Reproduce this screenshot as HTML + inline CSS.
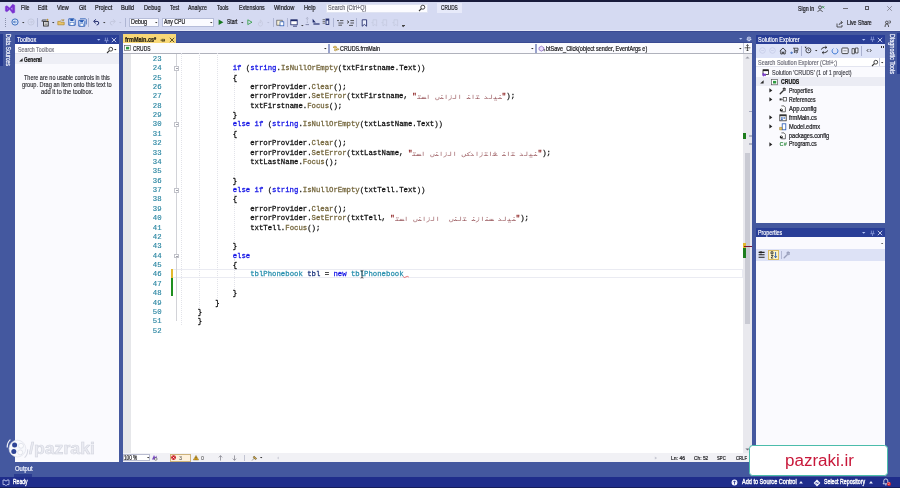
<!DOCTYPE html>
<html><head><meta charset="utf-8"><title>CRUDS - Microsoft Visual Studio</title>
<style>
html,body{margin:0;padding:0;}
body{width:900px;height:488px;overflow:hidden;position:relative;background:#44589f;font-family:"Liberation Sans",sans-serif;}
#r{position:absolute;left:0;top:0;width:900px;height:488px;overflow:hidden;will-change:transform;filter:blur(0.3px);}
#r>div,#r>svg,#r>span{position:absolute;}
svg{overflow:visible;}
.t{white-space:nowrap;transform-origin:0 50%;display:block;-webkit-text-stroke:0.22px currentColor;}
.c{white-space:pre;font-family:"Liberation Mono",monospace;font-size:7.304px;line-height:9.375px;height:9.375px;color:#101010;-webkit-text-stroke:0.26px currentColor;}
.c span{-webkit-text-stroke:0.26px currentColor;}
.n{text-align:right;font-family:"Liberation Mono",monospace;font-size:7.304px;line-height:9.375px;height:9.375px;color:#2a86a2;-webkit-text-stroke:0.15px currentColor;}
</style></head><body><div id="r"><div style="left:0px;top:0px;width:900px;height:488px;background:#44589f;"></div><div style="left:0px;top:0px;width:900px;height:31px;background:#d5daf2;"></div><div style="left:0px;top:29.8px;width:900px;height:1px;background:#e2e6f7;"></div><div style="left:0px;top:0px;width:900px;height:1.7px;background:#181b3c;"></div><div style="left:0px;top:30.8px;width:900px;height:1.6px;background:#3a4a92;"></div><span class="t" id="t1" style="left:20.75px;top:3.20px;line-height:10px;font-size:7px;color:#1a1a1e;transform:scaleX(0.7535);">File</span><span class="t" id="t2" style="left:38.25px;top:3.20px;line-height:10px;font-size:7px;color:#1a1a1e;transform:scaleX(0.7668);">Edit</span><span class="t" id="t3" style="left:57px;top:3.20px;line-height:10px;font-size:7px;color:#1a1a1e;transform:scaleX(0.7809);">View</span><span class="t" id="t4" style="left:78.75px;top:3.20px;line-height:10px;font-size:7px;color:#1a1a1e;transform:scaleX(0.7818);">Git</span><span class="t" id="t5" style="left:94.5px;top:3.20px;line-height:10px;font-size:7px;color:#1a1a1e;transform:scaleX(0.7914);">Project</span><span class="t" id="t6" style="left:121.25px;top:3.20px;line-height:10px;font-size:7px;color:#1a1a1e;transform:scaleX(0.8345);">Build</span><span class="t" id="t7" style="left:143.5px;top:3.20px;line-height:10px;font-size:7px;color:#1a1a1e;transform:scaleX(0.7994);">Debug</span><span class="t" id="t8" style="left:169.5px;top:3.20px;line-height:10px;font-size:7px;color:#1a1a1e;transform:scaleX(0.7202);">Test</span><span class="t" id="t9" style="left:188px;top:3.20px;line-height:10px;font-size:7px;color:#1a1a1e;transform:scaleX(0.7629);">Analyze</span><span class="t" id="t10" style="left:216.5px;top:3.20px;line-height:10px;font-size:7px;color:#1a1a1e;transform:scaleX(0.7036);">Tools</span><span class="t" id="t11" style="left:238.75px;top:3.20px;line-height:10px;font-size:7px;color:#1a1a1e;transform:scaleX(0.7518);">Extensions</span><span class="t" id="t12" style="left:274.25px;top:3.20px;line-height:10px;font-size:7px;color:#1a1a1e;transform:scaleX(0.8130);">Window</span><span class="t" id="t13" style="left:304px;top:3.20px;line-height:10px;font-size:7px;color:#1a1a1e;transform:scaleX(0.7983);">Help</span><svg style="left:5.4px;top:3.5px;" width="10" height="9.6" viewBox="0 0 10 9.6"><path d="M0.4 2.5 L1.9 1.8 L4.7 4 L7.6 0.3 L9.7 1.2 L9.7 8.4 L7.6 9.3 L4.7 5.6 L1.9 7.8 L0.4 7.1 Z M2.1 3.9 L2.1 5.7 L3.2 4.8 Z M7.5 3.2 L5.8 4.8 L7.5 6.4 Z" fill="#7a30d0" stroke="#7a30d0" stroke-width="0.5" stroke-linejoin="round" fill-rule="evenodd"/></svg><div style="left:325.6px;top:3.5px;width:102.6px;height:9.3px;background:#fcfcff;border:0.4px solid #dfe3f2;box-sizing:border-box;"></div><span class="t" id="t14" style="left:328px;top:3.00px;line-height:10px;font-size:6.8px;color:#6d6d78;transform:scaleX(0.8005);">Search (Ctrl+Q)</span><svg style="left:418px;top:4px;" width="8" height="8" viewBox="0 0 8 8"><circle cx="4.8" cy="3.2" r="2" fill="none" stroke="#333" stroke-width="0.9"/><path d="M3.4 4.6 L1 7" stroke="#333" stroke-width="1.1"/></svg><div style="left:436.6px;top:2.6px;width:25.9px;height:10.3px;background:#e7eafa;"></div><span class="t" id="t15" style="left:441.25px;top:3.00px;line-height:10px;font-size:6.8px;color:#1a1a1e;transform:scaleX(0.6930);">CRUDS</span><span class="t" id="t16" style="left:797.5px;top:3.50px;line-height:10px;font-size:6.8px;color:#1a1a1e;transform:scaleX(0.7814);">Sign in</span><svg style="left:817px;top:4.5px;" width="8" height="8" viewBox="0 0 8 8"><circle cx="3" cy="2.4" r="1.5" fill="none" stroke="#333" stroke-width="0.8"/><path d="M0.6 7 Q3 2.8 5.6 7" fill="none" stroke="#333" stroke-width="0.8"/><path d="M5 1 L7.4 3.4 M7.4 1 L5 3.4" stroke="#2a8a3a" stroke-width="0.7"/></svg><div style="left:843.4px;top:8.1px;width:4.6px;height:0.7px;background:#70707a;"></div><div style="left:865px;top:6.2px;width:4px;height:4px;background:transparent;border:0.7px solid #55555e;box-sizing:border-box;"></div><svg style="left:886px;top:5px;" width="7" height="7" viewBox="0 0 7 7"><path d="M1.2 1.2 L5.8 5.8 M5.8 1.2 L1.2 5.8" stroke="#70707a" stroke-width="0.7"/></svg><svg style="left:836px;top:19.5px;" width="8" height="8" viewBox="0 0 8 8"><path d="M1 3.5 L1 7 L6 7 L6 5" fill="none" stroke="#333" stroke-width="0.8"/><path d="M3 5 Q3.5 2.5 6 2.5 M4.8 1 L6.5 2.5 L4.8 4" fill="none" stroke="#333" stroke-width="0.8"/></svg><span class="t" id="t17" style="left:847px;top:18.00px;line-height:10px;font-size:6.8px;color:#1a1a1e;transform:scaleX(0.7615);">Live Share</span><svg style="left:883px;top:19.5px;" width="8" height="8" viewBox="0 0 8 8"><path d="M2 7 L2.4 4.6 Q3.8 3.4 5.2 4.6 L5.6 7" fill="none" stroke="#333" stroke-width="0.8"/><circle cx="3.8" cy="2.4" r="1.3" fill="none" stroke="#333" stroke-width="0.8"/><path d="M5.5 1 L7.5 1 L7.5 2.8 L6.5 2.8 L6 3.5 L6 2.8" fill="none" stroke="#333" stroke-width="0.6"/></svg><div style="left:5.2px;top:17.5px;width:0.8px;height:0.8px;background:#8a90aa;"></div><div style="left:5.2px;top:19.5px;width:0.8px;height:0.8px;background:#8a90aa;"></div><div style="left:5.2px;top:21.5px;width:0.8px;height:0.8px;background:#8a90aa;"></div><div style="left:5.2px;top:23.5px;width:0.8px;height:0.8px;background:#8a90aa;"></div><div style="left:5.2px;top:25.5px;width:0.8px;height:0.8px;background:#8a90aa;"></div><svg style="left:10.5px;top:18px;" width="8" height="8" viewBox="0 0 8 8"><circle cx="4" cy="4" r="3.1" fill="#dfe9fb" stroke="#2f63b8" stroke-width="0.9"/><path d="M5.6 4 L2.6 4 M3.8 2.7 L2.5 4 L3.8 5.3" fill="none" stroke="#2f63b8" stroke-width="0.8"/></svg><svg style="left:21.75px;top:21.975px;" width="2.5" height="1.25" viewBox="0 0 2.5 1.25"><path d="M0 0 L2.5 0 L1.25 1.25 Z" fill="#333"/></svg><svg style="left:26.5px;top:18px;" width="8" height="8" viewBox="0 0 8 8"><circle cx="4" cy="4" r="3.1" fill="none" stroke="#c2c7dc" stroke-width="0.9"/><path d="M2.4 4 L5.4 4 M4.2 2.7 L5.5 4 L4.2 5.3" fill="none" stroke="#c2c7dc" stroke-width="0.8"/></svg><div style="left:37.4px;top:17.5px;width:0.7px;height:9.5px;background:#aeb5d3;"></div><svg style="left:41px;top:17.5px;" width="9" height="9" viewBox="0 0 9 9"><path d="M1.2 2 L5.5 2 M1.2 2 L1.2 4" stroke="#333" stroke-width="0.8" fill="none"/><rect x="2.6" y="3.4" width="4.6" height="4.6" fill="#fff" stroke="#222" stroke-width="0.9"/><path d="M3.5 5 L6.3 5 M3.5 6.4 L6.3 6.4" stroke="#444" stroke-width="0.6"/><path d="M6.5 0.8 L6.5 2.8 M5.5 1.8 L7.5 1.8" stroke="#b8860b" stroke-width="0.7"/></svg><svg style="left:51.75px;top:21.975px;" width="2.5" height="1.25" viewBox="0 0 2.5 1.25"><path d="M0 0 L2.5 0 L1.25 1.25 Z" fill="#333"/></svg><svg style="left:57px;top:18px;" width="9" height="8" viewBox="0 0 9 8"><path d="M0.8 6.8 L0.8 3.4 L3.2 3.4 L3.8 4.2 L7.2 4.2 L7.2 6.8 Z" fill="#e9c46a" stroke="#a67c1a" stroke-width="0.6"/><path d="M3.5 2.6 Q5 0.8 6.6 2.4 M6.8 1 L6.7 2.6 L5.2 2.5" fill="none" stroke="#a67c1a" stroke-width="0.6"/></svg><svg style="left:68px;top:18.2px;" width="8" height="8" viewBox="0 0 8 8"><path d="M0.8 0.8 L6.2 0.8 L7.2 1.8 L7.2 7.2 L0.8 7.2 Z" fill="#e8f0fd" stroke="#2458b3" stroke-width="0.9"/><rect x="2.3" y="0.9" width="3.2" height="2.2" fill="#2458b3"/><rect x="2" y="4.6" width="4" height="2.6" fill="#fff" stroke="#2458b3" stroke-width="0.5"/></svg><svg style="left:77.5px;top:18px;" width="9" height="9" viewBox="0 0 9 9"><path d="M2 0.8 L7.6 0.8 L8.3 1.5 L8.3 6.4" fill="none" stroke="#2458b3" stroke-width="0.8"/><path d="M0.8 2.4 L5.8 2.4 L6.8 3.4 L6.8 8.2 L0.8 8.2 Z" fill="#e8f0fd" stroke="#2458b3" stroke-width="0.9"/><rect x="2.2" y="2.5" width="3" height="1.9" fill="#2458b3"/><rect x="2" y="5.8" width="3.6" height="2.3" fill="#fff" stroke="#2458b3" stroke-width="0.5"/></svg><div style="left:88px;top:17.5px;width:0.7px;height:9.5px;background:#aeb5d3;"></div><svg style="left:92px;top:18px;" width="8" height="8" viewBox="0 0 8 8"><path d="M2.2 3.4 L5 3.4 Q6.8 3.4 6.8 5 Q6.8 6.8 4.6 7" fill="none" stroke="#1f2a6b" stroke-width="1"/><path d="M3.8 1.4 L1.6 3.4 L3.8 5.4" fill="none" stroke="#1f2a6b" stroke-width="1"/></svg><svg style="left:103.25px;top:21.975px;" width="2.5" height="1.25" viewBox="0 0 2.5 1.25"><path d="M0 0 L2.5 0 L1.25 1.25 Z" fill="#333"/></svg><svg style="left:108.5px;top:18px;" width="8" height="8" viewBox="0 0 8 8"><path d="M5.8 3.4 L3 3.4 Q1.2 3.4 1.2 5 Q1.2 6.8 3.4 7" fill="none" stroke="#c3c8de" stroke-width="1"/><path d="M4.2 1.4 L6.4 3.4 L4.2 5.4" fill="none" stroke="#c3c8de" stroke-width="1"/></svg><svg style="left:119.25px;top:21.975px;" width="2.5" height="1.25" viewBox="0 0 2.5 1.25"><path d="M0 0 L2.5 0 L1.25 1.25 Z" fill="#b9bed6"/></svg><div style="left:125px;top:17.5px;width:0.7px;height:9.5px;background:#aeb5d3;"></div><div style="left:128.75px;top:17.5px;width:30.5px;height:9.6px;background:#fbfbff;border:0.6px solid #b6bdd9;box-sizing:border-box;"></div><span class="t" id="t18" style="left:131px;top:17.40px;line-height:10px;font-size:6.8px;color:#1a1a1e;transform:scaleX(0.7988);">Debug</span><svg style="left:154.75px;top:21.975px;" width="2.5" height="1.25" viewBox="0 0 2.5 1.25"><path d="M0 0 L2.5 0 L1.25 1.25 Z" fill="#333"/></svg><div style="left:162px;top:17.5px;width:51.75px;height:9.6px;background:#fbfbff;border:0.6px solid #b6bdd9;box-sizing:border-box;"></div><span class="t" id="t19" style="left:164.25px;top:17.40px;line-height:10px;font-size:6.8px;color:#1a1a1e;transform:scaleX(0.7602);">Any CPU</span><svg style="left:209.5px;top:21.975px;" width="2.5" height="1.25" viewBox="0 0 2.5 1.25"><path d="M0 0 L2.5 0 L1.25 1.25 Z" fill="#333"/></svg><svg style="left:217.5px;top:19.2px;" width="6" height="6.5" viewBox="0 0 6 6.5"><path d="M0.6 0.4 L5.4 3.2 L0.6 6 Z" fill="#17771f"/></svg><span class="t" id="t20" style="left:227px;top:17.40px;line-height:10px;font-size:6.8px;color:#1a1a1e;transform:scaleX(0.7312);">Start</span><svg style="left:240.75px;top:21.975px;" width="2.5" height="1.25" viewBox="0 0 2.5 1.25"><path d="M0 0 L2.5 0 L1.25 1.25 Z" fill="#333"/></svg><svg style="left:246.5px;top:19.2px;" width="6" height="6.5" viewBox="0 0 6 6.5"><path d="M0.8 0.8 L5 3.2 L0.8 5.6 Z" fill="none" stroke="#2a9a3a" stroke-width="0.8"/></svg><svg style="left:257px;top:18.5px;" width="7" height="8" viewBox="0 0 7 8"><path d="M3.5 0.8 Q6 3.4 5.4 5.6 Q4.8 7.2 3.4 7.2 Q1.6 7 1.4 5.2 Q1.4 3.8 2.6 2.8 Q2.8 4 3.6 3.8 Q3 2.4 3.5 0.8 Z" fill="none" stroke="#c5c9dd" stroke-width="0.8"/></svg><svg style="left:267.0px;top:21.975px;" width="2.5" height="1.25" viewBox="0 0 2.5 1.25"><path d="M0 0 L2.5 0 L1.25 1.25 Z" fill="#b9bed6"/></svg><div style="left:272.5px;top:17.5px;width:0.7px;height:9.5px;background:#aeb5d3;"></div><svg style="left:276px;top:18.5px;" width="9" height="8" viewBox="0 0 9 8"><rect x="0.8" y="1.2" width="5.4" height="5" fill="#f7f0d6" stroke="#555" stroke-width="0.7"/><rect x="4" y="2.8" width="3.8" height="4" fill="#fff" stroke="#2458b3" stroke-width="0.7"/></svg><div style="left:286.75px;top:17.5px;width:0.7px;height:9.5px;background:#aeb5d3;"></div><svg style="left:290px;top:18.5px;" width="9" height="8" viewBox="0 0 9 8"><rect x="0.8" y="0.8" width="6.4" height="5" fill="#fff" stroke="#1f2a6b" stroke-width="0.8"/><rect x="0.8" y="0.8" width="6.4" height="1.4" fill="#1f2a6b"/><path d="M3 7.2 L7 7.2" stroke="#1f2a6b" stroke-width="0.8"/></svg><svg style="left:301.2px;top:24.950000000000003px;" width="2.6" height="1.3" viewBox="0 0 2.6 1.3"><path d="M0 0 L2.6 0 L1.3 1.3 Z" fill="#333"/></svg><svg style="left:304px;top:17.4px;" width="7" height="9" viewBox="0 0 7 9"><path d="M3.3 0.6 L3.3 6.2 M2.1 1.8 L3.3 0.5 L4.5 1.8" fill="none" stroke="#8a8fa8" stroke-width="0.6" stroke-dasharray="0.9 0.6"/><path d="M1.6 7.6 L5 7.6" stroke="#6a7096" stroke-width="0.8"/></svg><svg style="left:311.5px;top:18px;" width="8" height="8" viewBox="0 0 8 8"><path d="M0.6 0.8 L0.6 4.4 L3.8 4.4 Z" fill="#1f2a6b"/><path d="M1.4 6 L7.6 6" stroke="#1f2a6b" stroke-width="1.2"/></svg><svg style="left:321.6px;top:18px;" width="8" height="8" viewBox="0 0 8 8"><path d="M0.6 1.6 L3 1.6 M0.6 3.4 L3 3.4 M0.6 5.2 L3 5.2" stroke="#555" stroke-width="0.8"/><rect x="4" y="1" width="2.8" height="5.4" fill="#dfe5f8" stroke="#1f2a6b" stroke-width="0.9"/><rect x="4" y="1" width="2.8" height="1.6" fill="#1f2a6b"/></svg><div style="left:332.5px;top:17.5px;width:0.7px;height:9.5px;background:#aeb5d3;"></div><svg style="left:336px;top:18.5px;" width="8" height="8" viewBox="0 0 8 8"><path d="M1 1.6 L3 1.6 M4 1.6 L7.4 1.6 M2.4 4 L7.4 4 M2.4 6.2 L6 6.2" stroke="#333" stroke-width="0.8"/></svg><svg style="left:346px;top:18.5px;" width="9" height="8" viewBox="0 0 9 8"><path d="M1 1.6 L3 3 L1 4.4 M4.4 1.6 L8 1.6 M4.4 4 L8 4 M3 6.4 L7 6.4" stroke="#333" stroke-width="0.8" fill="none"/></svg><div style="left:356px;top:17.5px;width:0.7px;height:9.5px;background:#aeb5d3;"></div><svg style="left:360.5px;top:18.5px;" width="7" height="8" viewBox="0 0 7 8"><path d="M1.2 0.8 L5.6 0.8 L5.6 7.2 L3.4 5.4 L1.2 7.2 Z" fill="#e9edfb" stroke="#262f6e" stroke-width="0.9"/></svg><svg style="left:371px;top:18.5px;" width="8" height="8" viewBox="0 0 8 8"><path d="M2 0.8 L5.6 0.8 L5.6 7 L3.8 5.4 L2 7 Z M0.4 3.6 L2 3.6" fill="none" stroke="#c3c8de" stroke-width="0.7"/></svg><svg style="left:381px;top:18.5px;" width="8" height="8" viewBox="0 0 8 8"><path d="M2 0.8 L5.6 0.8 L5.6 7 L3.8 5.4 L2 7 Z M0.4 3.6 L2 3.6" fill="none" stroke="#c3c8de" stroke-width="0.7"/></svg><svg style="left:391.5px;top:18.5px;" width="8" height="8" viewBox="0 0 8 8"><path d="M2 0.8 L5.6 0.8 L5.6 7 L3.8 5.4 L2 7 Z M0.4 3.6 L2 3.6" fill="none" stroke="#c3c8de" stroke-width="0.7"/></svg><div style="left:402px;top:25.2px;width:3.2px;height:0.7px;background:#444;"></div><svg style="left:402.40000000000003px;top:26.2px;" width="2.4" height="1.2" viewBox="0 0 2.4 1.2"><path d="M0 0 L2.4 0 L1.2 1.2 Z" fill="#444"/></svg><div style="left:0px;top:34.2px;width:3px;height:31.6px;background:#263b90;"></div><span class="t" id="t21" style="left:13.00px;top:33.80px;line-height:10px;font-size:7px;color:#f4f6ff;transform-origin:0 0;transform:rotate(90deg) scaleX(0.7496);">Data Sources</span><div style="left:15px;top:34.7px;width:104px;height:427.3px;background:#fafafe;"></div><div style="left:15px;top:34.7px;width:104px;height:9.7px;background:#293e97;"></div><span class="t" id="t22" style="left:17px;top:34.60px;line-height:10px;font-size:7px;color:#ffffff;-webkit-text-stroke:0.18px currentColor;transform:scaleX(0.7974);">Toolbox</span><svg style="left:96.6px;top:38.75px;" width="3.4" height="1.7" viewBox="0 0 3.4 1.7"><path d="M0 0 L3.4 0 L1.7 1.7 Z" fill="#b4c6f8"/></svg><svg style="left:103.5px;top:36.6px;" width="5" height="6.4" viewBox="0 0 5 6.4"><path d="M1.4 0.6 L1.4 3.6 M3.4 0.6 L3.4 3.6 M0.4 3.7 L4.6 3.7 M2.5 3.8 L2.5 6" stroke="#a9b9ee" stroke-width="0.6" fill="none"/></svg><svg style="left:111px;top:36.8px;" width="6" height="6" viewBox="0 0 6 6"><path d="M0.8 0.8 L5.2 5.2 M5.2 0.8 L0.8 5.2" stroke="#e4e8fb" stroke-width="0.8"/></svg><div style="left:15px;top:44.4px;width:104px;height:9.8px;background:#ffffff;border-bottom:0.5px solid #e3e5f0;box-sizing:border-box;"></div><span class="t" id="t23" style="left:17.5px;top:44.50px;line-height:10px;font-size:6.8px;color:#7a7a86;transform:scaleX(0.7757);">Search Toolbox</span><svg style="left:105.5px;top:45.6px;" width="8" height="8" viewBox="0 0 8 8"><circle cx="4.8" cy="3.2" r="1.9" fill="none" stroke="#333" stroke-width="0.9"/><path d="M3.4 4.6 L1 7" stroke="#333" stroke-width="1.1"/></svg><svg style="left:114.2px;top:49.15px;" width="2.6" height="1.3" viewBox="0 0 2.6 1.3"><path d="M0 0 L2.6 0 L1.3 1.3 Z" fill="#222"/></svg><div style="left:15px;top:54.4px;width:104px;height:9.5px;background:#eeeff6;"></div><svg style="left:18.7px;top:57.7px;" width="4" height="4" viewBox="0 0 4 4"><path d="M3.6 0.2 L3.6 3.6 L0.2 3.6 Z" fill="#222"/></svg><span class="t" id="t24" style="left:24.25px;top:54.80px;line-height:10px;font-size:6.9px;color:#111;font-weight:700;transform:scaleX(0.6914);">General</span><span class="t" id="t25" style="left:24.25px;top:72.60px;line-height:10px;font-size:6.7px;color:#1c1c22;-webkit-text-stroke:0.12px currentColor;transform:scaleX(0.8208);">There are no usable controls in this</span><span class="t" id="t26" style="left:22px;top:79.60px;line-height:10px;font-size:6.7px;color:#1c1c22;-webkit-text-stroke:0.12px currentColor;transform:scaleX(0.8441);">group. Drag an item onto this text to</span><span class="t" id="t27" style="left:40.75px;top:86.60px;line-height:10px;font-size:6.7px;color:#1c1c22;-webkit-text-stroke:0.12px currentColor;transform:scaleX(0.8674);">add it to the toolbox.</span><div style="left:122.6px;top:43px;width:629.1999999999999px;height:419px;background:#ffffff;"></div><div style="left:122.6px;top:34px;width:53.80000000000001px;height:9.6px;background:#f8d877;"></div><svg style="left:739.0999999999999px;top:38.15px;" width="3.4" height="1.7" viewBox="0 0 3.4 1.7"><path d="M0 0 L3.4 0 L1.7 1.7 Z" fill="#b4c6f8"/></svg><svg style="left:746px;top:35.8px;" width="6" height="6" viewBox="0 0 6 6"><circle cx="3" cy="3" r="1.7" fill="none" stroke="#d5dcf6" stroke-width="1.4" stroke-dasharray="0.9 0.45"/><circle cx="3" cy="3" r="1.2" fill="none" stroke="#d5dcf6" stroke-width="0.7"/></svg><div style="left:122.6px;top:42.6px;width:629.1999999999999px;height:10.8px;background:#fbfbfe;"></div><div style="left:122.6px;top:34px;width:53.80000000000001px;height:9.4px;background:#f8d877;"></div><span class="t" id="t28" style="left:125px;top:34.50px;line-height:10px;font-size:7px;color:#1d1a10;font-weight:700;transform:scaleX(0.7874);">frmMain.cs*</span><svg style="left:160.2px;top:37.6px;" width="6" height="4.4" viewBox="0 0 6 4.4"><path d="M0.4 2.2 L2 2.2 M2 0.9 L2 3.5 M2 1.3 L4.4 1.3 L4.4 3.1 L2 3.1 M4.4 1 L4.4 3.4 M2 2.7 L4.4 2.7" stroke="#3b3210" stroke-width="0.6" fill="none"/></svg><svg style="left:168.6px;top:36.7px;" width="6" height="6" viewBox="0 0 6 6"><path d="M0.8 0.8 L5.2 5.2 M5.2 0.8 L0.8 5.2" stroke="#3b3210" stroke-width="0.8"/></svg><div style="left:122.6px;top:53.1px;width:629.1999999999999px;height:0.7px;background:#b0b2bc;"></div><div style="left:176.4px;top:41.6px;width:575.4px;height:1px;background:#3a4a92;"></div><svg style="left:124px;top:45.4px;" width="7" height="6.4" viewBox="0 0 7 6.4"><rect x="0.5" y="0.6" width="6" height="5" fill="#fff" stroke="#555" stroke-width="0.6"/><rect x="2" y="1.8" width="3.2" height="2.6" fill="#2e9a40"/></svg><span class="t" id="t29" style="left:132.5px;top:44.00px;line-height:10px;font-size:6.8px;color:#1a1a1e;transform:scaleX(0.7240);">CRUDS</span><svg style="left:324.45px;top:48.15px;" width="2.6" height="1.3" viewBox="0 0 2.6 1.3"><path d="M0 0 L2.6 0 L1.3 1.3 Z" fill="#222"/></svg><div style="left:328.4px;top:43.6px;width:1.5px;height:9.2px;background:#98a2cc;"></div><svg style="left:331.6px;top:45px;" width="8" height="7" viewBox="0 0 8 7"><path d="M1 2.2 L3 1 L5 2.2 L3 3.4 Z" fill="#e8c56a" stroke="#9a7a20" stroke-width="0.5"/><path d="M4 4.2 L5.6 3.4 L7.2 4.2 L5.6 5 Z M2 5 L3.4 4.4 L4.8 5 L3.4 5.8 Z" fill="#e8c56a" stroke="#9a7a20" stroke-width="0.5"/></svg><span class="t" id="t30" style="left:340px;top:44.00px;line-height:10px;font-size:6.8px;color:#1a1a1e;transform:scaleX(0.7904);">CRUDS.frmMain</span><svg style="left:531.2px;top:48.15px;" width="2.6" height="1.3" viewBox="0 0 2.6 1.3"><path d="M0 0 L2.6 0 L1.3 1.3 Z" fill="#222"/></svg><div style="left:535.4px;top:43.6px;width:1.5px;height:9.2px;background:#98a2cc;"></div><svg style="left:538.4px;top:45px;" width="8" height="7" viewBox="0 0 8 7"><path d="M1 2.6 L3.4 1.2 L5.8 2.6 L5.8 4.8 L3.4 6.2 L1 4.8 Z" fill="#e9defa" stroke="#6a3fb0" stroke-width="0.6"/><path d="M5.4 5 L7.4 5 M6.4 4 L6.4 6.4" stroke="#333" stroke-width="0.5"/></svg><span class="t" id="t31" style="left:546.25px;top:44.00px;line-height:10px;font-size:6.8px;color:#1a1a1e;transform:scaleX(0.8072);">btSave_Click(object sender, EventArgs e)</span><svg style="left:738.7px;top:48.15px;" width="2.6" height="1.3" viewBox="0 0 2.6 1.3"><path d="M0 0 L2.6 0 L1.3 1.3 Z" fill="#222"/></svg><div style="left:743px;top:43.3px;width:0.6px;height:9.5px;background:#c6c9d8;"></div><svg style="left:744.2px;top:44.4px;" width="7" height="7.6" viewBox="0 0 7 7.6"><path d="M0.6 3.8 L6.4 3.8 M3.5 0.6 L3.5 7 M2.3 1.8 L3.5 0.6 L4.7 1.8 M2.3 5.8 L3.5 7 L4.7 5.8" stroke="#222" stroke-width="0.7" fill="none"/></svg><div style="left:122.6px;top:53.8px;width:8.2px;height:398.8px;background:#e6e7ea;"></div><div style="left:743px;top:53.8px;width:8.799999999999955px;height:398.8px;background:#e9e9ee;"></div><div style="left:745.2px;top:153px;width:4.7px;height:170.8px;background:#c9cad3;"></div><svg style="left:745px;top:56px;" width="5" height="3" viewBox="0 0 5 3"><path d="M0.4 2.6 L2.5 0.4 L4.6 2.6 Z" fill="#9a9ba6"/></svg><svg style="left:745px;top:447.6px;" width="5" height="3" viewBox="0 0 5 3"><path d="M0.4 0.4 L4.6 0.4 L2.5 2.6 Z" fill="#6d6e78"/></svg><div style="left:749.2px;top:110.7px;width:2.4px;height:1.6px;background:#a3a7bd;"></div><div style="left:743.4px;top:132.8px;width:2.5px;height:6.3px;background:#1d7d1d;"></div><div style="left:749.2px;top:135px;width:2.4px;height:1.6px;background:#b0b3c2;"></div><div style="left:749.2px;top:143.1px;width:2.4px;height:1.6px;background:#b0b3c2;"></div><div style="left:743.2px;top:243px;width:2.6px;height:4.5px;background:#e3b92c;"></div><div style="left:743.2px;top:247.5px;width:2.6px;height:10.2px;background:#1d7d1d;"></div><div style="left:743.8px;top:245.8px;width:8.4px;height:1.2px;background:#7a1436;"></div><div style="left:171.6px;top:268.925px;width:571.2px;height:9.075px;background:transparent;border:0.7px solid #eaebf2;box-sizing:border-box;"></div><div style="left:170.8px;top:268.925px;width:2.2px;height:9.375px;background:#e3b92c;"></div><div style="left:170.8px;top:278.3px;width:2.2px;height:18.15px;background:#1f8f1f;"></div><div style="left:176.3px;top:53.8px;width:0.8px;height:266.8px;background:#d2d3d8;"></div><div style="left:181.4px;top:53.10px;width:0;height:271.88px;border-left:0.6px dotted #e2e3e9;"></div><div style="left:199px;top:53.10px;width:0;height:262.50px;border-left:0.6px dotted #e2e3e9;"></div><div style="left:216.5px;top:53.10px;width:0;height:253.13px;border-left:0.6px dotted #e2e3e9;"></div><div style="left:234px;top:71.85px;width:0;height:46.88px;border-left:0.6px dotted #e2e3e9;"></div><div style="left:234px;top:128.10px;width:0;height:56.25px;border-left:0.6px dotted #e2e3e9;"></div><div style="left:234px;top:193.72px;width:0;height:56.25px;border-left:0.6px dotted #e2e3e9;"></div><div style="left:234px;top:259.35px;width:0;height:37.50px;border-left:0.6px dotted #e2e3e9;"></div><div class="c" style="left:232.70px;top:64.17px;"><span style="color:#1414e6">if</span> (<span style="color:#1414e6">string</span>.<span style="color:#74663c">IsNullOrEmpty</span>(txtFirstname.Text))</div><div class="c" style="left:232.70px;top:73.55px;">{</div><div class="c" style="left:250.23px;top:82.92px;">errorProvider.<span style="color:#74663c">Clear</span>();</div><div class="c" style="left:250.23px;top:92.30px;">errorProvider.<span style="color:#74663c">SetError</span>(txtFirstname, <span style="color:#8a1c1c">"</span><svg class="fs" width="85.22" height="9.375" viewBox="0 0 85.22 9.375" style="position:static;display:inline-block;vertical-align:top;"><path d="M0.45 6.50L4.04 6.50M2.24 6.50l0 -1.3M1.35 3.80l0.5 0M2.92 3.80l0.5 0 M4.49 6.50L8.97 6.50M5.38 6.50l0 -1.2M6.73 6.50l0 -1.2M8.07 6.50l0 -1.2 M11.21 3.20L11.21 6.50 M22.20 5.30q0.3 2.8 -2.24 2.6q-2.24 -0.2 -1.35 -1.8 M23.10 6.50L26.24 6.50M23.55 6.50q1.12 -2.6 2.24 0M24.67 3.50l0.5 0 M29.15 3.20L29.15 6.50 M34.53 5.60q0.1 2 -2.69 2.5M34.09 4.00l0.5 0 M38.66 3.10L38.66 6.50L35.88 6.50 M42.61 3.20L42.61 6.50 M50.01 6.50L53.15 6.50M50.46 6.50q1.12 -2.6 2.24 0M51.58 3.50l0.5 0 M56.06 3.20L56.06 6.50 M58.75 6.50L62.34 6.50M60.55 6.50l0 -1.3M59.65 3.80l0.5 0M61.22 3.80l0.5 0 M68.62 4.60l2.02 1.9l-2.92 0 M74.54 3.10L74.54 6.50L71.76 6.50 M76.69 6.50L80.28 6.50M78.49 6.50l0 -1.3M77.59 8.10l0.5 0M79.16 8.10l0.5 0 M81.40 6.50L84.54 6.50M81.85 6.50q1.12 -2.6 2.24 0M82.97 3.50l0.5 0" fill="none" stroke="#85353c" stroke-opacity="0.85" stroke-width="0.62" stroke-linecap="round" stroke-linejoin="round"/></svg><span style="color:#8a1c1c">"</span>);</div><div class="c" style="left:250.23px;top:101.67px;">txtFirstname.<span style="color:#74663c">Focus</span>();</div><div class="c" style="left:232.70px;top:111.05px;">}</div><div class="c" style="left:232.70px;top:120.42px;"><span style="color:#1414e6">else if</span> (<span style="color:#1414e6">string</span>.<span style="color:#74663c">IsNullOrEmpty</span>(txtLastName.Text))</div><div class="c" style="left:232.70px;top:129.80px;">{</div><div class="c" style="left:250.23px;top:139.17px;">errorProvider.<span style="color:#74663c">Clear</span>();</div><div class="c" style="left:250.23px;top:148.55px;">errorProvider.<span style="color:#74663c">SetError</span>(txtLastName, <span style="color:#8a1c1c">"</span><svg class="fs" width="125.58" height="9.375" viewBox="0 0 125.58 9.375" style="position:static;display:inline-block;vertical-align:top;"><path d="M0.45 6.50L4.04 6.50M2.24 6.50l0 -1.3M1.35 3.80l0.5 0M2.92 3.80l0.5 0 M4.49 6.50L8.97 6.50M5.38 6.50l0 -1.2M6.73 6.50l0 -1.2M8.07 6.50l0 -1.2 M11.21 3.20L11.21 6.50 M22.20 5.30q0.3 2.8 -2.24 2.6q-2.24 -0.2 -1.35 -1.8 M23.10 6.50L26.24 6.50M23.55 6.50q1.12 -2.6 2.24 0M24.67 3.50l0.5 0 M29.15 3.20L29.15 6.50 M34.53 5.60q0.1 2 -2.69 2.5M34.09 4.00l0.5 0 M38.66 3.10L38.66 6.50L35.88 6.50 M42.61 3.20L42.61 6.50 M53.60 5.30q0.3 2.8 -2.24 2.6q-2.24 -0.2 -1.35 -1.8 M58.30 3.00L55.17 4.70L57.41 6.50L53.82 6.50 M59.65 4.60l2.02 1.9l-2.92 0 M65.03 3.20L65.03 6.50 M70.41 5.60q0.1 2 -2.69 2.5M69.97 4.00l0.5 0 M72.21 6.50L75.80 6.50M74.00 6.50l0 -1.3M73.11 3.80l0.5 0M74.68 3.80l0.5 0 M78.49 3.20L78.49 6.50 M80.73 6.50L85.22 6.50M81.40 4.80l3.14 0l-2.24 1.7M82.75 3.30l0.5 0 M90.37 6.50L93.51 6.50M90.82 6.50q1.12 -2.6 2.24 0M91.94 3.50l0.5 0 M96.43 3.20L96.43 6.50 M99.12 6.50L102.71 6.50M100.91 6.50l0 -1.3M100.02 3.80l0.5 0M101.59 3.80l0.5 0 M108.99 4.60l2.02 1.9l-2.92 0 M114.91 3.10L114.91 6.50L112.12 6.50 M117.06 6.50L120.65 6.50M118.85 6.50l0 -1.3M117.96 8.10l0.5 0M119.53 8.10l0.5 0 M121.77 6.50L124.91 6.50M122.22 6.50q1.12 -2.6 2.24 0M123.34 3.50l0.5 0" fill="none" stroke="#85353c" stroke-opacity="0.85" stroke-width="0.62" stroke-linecap="round" stroke-linejoin="round"/></svg><span style="color:#8a1c1c">"</span>);</div><div class="c" style="left:250.23px;top:157.92px;">txtLastName.<span style="color:#74663c">Focus</span>();</div><div class="c" style="left:232.70px;top:176.67px;">}</div><div class="c" style="left:232.70px;top:186.05px;"><span style="color:#1414e6">else if</span> (<span style="color:#1414e6">string</span>.<span style="color:#74663c">IsNullOrEmpty</span>(txtTell.Text))</div><div class="c" style="left:232.70px;top:195.42px;">{</div><div class="c" style="left:250.23px;top:204.80px;">errorProvider.<span style="color:#74663c">Clear</span>();</div><div class="c" style="left:250.23px;top:214.17px;">errorProvider.<span style="color:#74663c">SetError</span>(txtTell, <span style="color:#8a1c1c">"</span><svg class="fs" width="121.10" height="9.375" viewBox="0 0 121.10 9.375" style="position:static;display:inline-block;vertical-align:top;"><path d="M0.45 6.50L4.04 6.50M2.24 6.50l0 -1.3M1.35 3.80l0.5 0M2.92 3.80l0.5 0 M4.49 6.50L8.97 6.50M5.38 6.50l0 -1.2M6.73 6.50l0 -1.2M8.07 6.50l0 -1.2 M11.21 3.20L11.21 6.50 M22.20 5.30q0.3 2.8 -2.24 2.6q-2.24 -0.2 -1.35 -1.8 M23.10 6.50L26.24 6.50M23.55 6.50q1.12 -2.6 2.24 0M24.67 3.50l0.5 0 M29.15 3.20L29.15 6.50 M34.53 5.60q0.1 2 -2.69 2.5M34.09 4.00l0.5 0 M38.66 3.10L38.66 6.50L35.88 6.50 M42.61 3.20L42.61 6.50 M58.08 5.30q0.3 2.8 -2.24 2.6q-2.24 -0.2 -1.35 -1.8 M58.98 6.50L62.12 6.50M59.43 6.50q1.12 -2.6 2.24 0M60.55 3.50l0.5 0 M65.57 3.10L65.57 6.50L62.79 6.50 M67.72 6.50L71.31 6.50M69.52 6.50l0 -1.3M68.62 3.80l0.5 0M70.19 3.80l0.5 0 M76.92 6.50L80.06 6.50M77.37 6.50q1.12 -2.6 2.24 0M78.49 3.50l0.5 0 M83.87 5.60q0.1 2 -2.69 2.5M83.42 4.00l0.5 0 M87.46 3.20L87.46 6.50 M90.37 6.50L93.51 6.50M90.82 6.50q1.12 -2.6 2.24 0M91.94 3.50l0.5 0 M94.19 6.50L98.67 6.50M95.08 6.50l0 -1.2M96.43 6.50l0 -1.2M97.77 6.50l0 -1.2 M104.50 4.60l2.02 1.9l-2.92 0 M110.42 3.10L110.42 6.50L107.64 6.50 M112.57 6.50L116.16 6.50M114.37 6.50l0 -1.3M113.47 8.10l0.5 0M115.04 8.10l0.5 0 M117.28 6.50L120.42 6.50M117.73 6.50q1.12 -2.6 2.24 0M118.85 3.50l0.5 0" fill="none" stroke="#85353c" stroke-opacity="0.85" stroke-width="0.62" stroke-linecap="round" stroke-linejoin="round"/></svg><span style="color:#8a1c1c">"</span>);</div><div class="c" style="left:250.23px;top:223.55px;">txtTell.<span style="color:#74663c">Focus</span>();</div><div class="c" style="left:232.70px;top:242.30px;">}</div><div class="c" style="left:232.70px;top:251.67px;"><span style="color:#1414e6">else</span></div><div class="c" style="left:232.70px;top:261.05px;">{</div><div class="c" style="left:250.23px;top:270.43px;"><span style="color:#2b91af">tblPhonebook</span> <span style="color:#1f377f">tbl</span> = <span style="color:#1414e6">new</span> <span style="color:#2b91af">tblPhonebook</span></div><div class="c" style="left:232.70px;top:289.18px;">}</div><div class="c" style="left:215.16px;top:298.55px;">}</div><div class="c" style="left:197.63px;top:307.93px;">}</div><div class="c" style="left:197.63px;top:317.30px;">}</div><div class="n" style="left:140px;width:21.6px;top:54.80px;">23</div><div class="n" style="left:140px;width:21.6px;top:64.17px;">24</div><div class="n" style="left:140px;width:21.6px;top:73.55px;">25</div><div class="n" style="left:140px;width:21.6px;top:82.92px;">26</div><div class="n" style="left:140px;width:21.6px;top:92.30px;">27</div><div class="n" style="left:140px;width:21.6px;top:101.67px;">28</div><div class="n" style="left:140px;width:21.6px;top:111.05px;">29</div><div class="n" style="left:140px;width:21.6px;top:120.42px;">30</div><div class="n" style="left:140px;width:21.6px;top:129.80px;">31</div><div class="n" style="left:140px;width:21.6px;top:139.17px;">32</div><div class="n" style="left:140px;width:21.6px;top:148.55px;">33</div><div class="n" style="left:140px;width:21.6px;top:157.92px;">34</div><div class="n" style="left:140px;width:21.6px;top:167.30px;">35</div><div class="n" style="left:140px;width:21.6px;top:176.67px;">36</div><div class="n" style="left:140px;width:21.6px;top:186.05px;">37</div><div class="n" style="left:140px;width:21.6px;top:195.42px;">38</div><div class="n" style="left:140px;width:21.6px;top:204.80px;">39</div><div class="n" style="left:140px;width:21.6px;top:214.17px;">40</div><div class="n" style="left:140px;width:21.6px;top:223.55px;">41</div><div class="n" style="left:140px;width:21.6px;top:232.92px;">42</div><div class="n" style="left:140px;width:21.6px;top:242.30px;">43</div><div class="n" style="left:140px;width:21.6px;top:251.67px;">44</div><div class="n" style="left:140px;width:21.6px;top:261.05px;">45</div><div class="n" style="left:140px;width:21.6px;top:270.43px;">46</div><div class="n" style="left:140px;width:21.6px;top:279.80px;">47</div><div class="n" style="left:140px;width:21.6px;top:289.18px;">48</div><div class="n" style="left:140px;width:21.6px;top:298.55px;">49</div><div class="n" style="left:140px;width:21.6px;top:307.93px;">50</div><div class="n" style="left:140px;width:21.6px;top:317.30px;">51</div><div class="n" style="left:140px;width:21.6px;top:326.68px;">52</div><div style="left:174.4px;top:66.075px;width:4.6px;height:4.6px;background:#fff;border:0.7px solid #c2c3ca;box-sizing:border-box;"></div><div style="left:175.6px;top:68.175px;width:2.2px;height:0.5px;background:#a0a1aa;"></div><div style="left:174.4px;top:122.32499999999999px;width:4.6px;height:4.6px;background:#fff;border:0.7px solid #c2c3ca;box-sizing:border-box;"></div><div style="left:175.6px;top:124.425px;width:2.2px;height:0.5px;background:#a0a1aa;"></div><div style="left:174.4px;top:187.95px;width:4.6px;height:4.6px;background:#fff;border:0.7px solid #c2c3ca;box-sizing:border-box;"></div><div style="left:175.6px;top:190.04999999999998px;width:2.2px;height:0.5px;background:#a0a1aa;"></div><div style="left:174.4px;top:253.575px;width:4.6px;height:4.6px;background:#fff;border:0.7px solid #c2c3ca;box-sizing:border-box;"></div><div style="left:175.6px;top:255.67499999999998px;width:2.2px;height:0.5px;background:#a0a1aa;"></div><svg style="left:403.3px;top:275.925px;" width="6" height="2" viewBox="0 0 6 2"><path d="M0 0.4 Q1.4 2.3 2.8 1 T5.8 1" fill="none" stroke="#e03030" stroke-width="0.65"/></svg><svg style="left:359.8px;top:270.02500000000003px;" width="4" height="8.6" viewBox="0 0 4 8.6"><path d="M0.6 0.5 Q2 0.5 2 1.4 Q2 0.5 3.4 0.5 M2 1.2 L2 7.4 M0.6 8.1 Q2 8.1 2 7.2 Q2 8.1 3.4 8.1" fill="none" stroke="#222" stroke-width="0.7"/></svg><div style="left:122.6px;top:453.2px;width:629.1999999999999px;height:8.7px;background:#f1f1f5;"></div><div style="left:123px;top:454px;width:27.2px;height:7.4px;background:#ffffff;border:0.5px solid #b9bcd0;box-sizing:border-box;"></div><span class="t" id="t32" style="left:124.25px;top:452.90px;line-height:10px;font-size:6.6px;color:#1a1a1e;transform:scaleX(0.7084);">100 %</span><svg style="left:146.8px;top:457.4px;" width="2.4" height="1.2" viewBox="0 0 2.4 1.2"><path d="M0 0 L2.4 0 L1.2 1.2 Z" fill="#222"/></svg><svg style="left:151.4px;top:454.4px;" width="7" height="7" viewBox="0 0 7 7"><path d="M1 5.6 L3 1 L4.2 3.4 L5.4 1.6 L6 5.6 Z" fill="#7b4cc2"/><circle cx="4.8" cy="5" r="1.3" fill="#fff" stroke="#333" stroke-width="0.5"/></svg><div style="left:169.5px;top:453.6px;width:21.4px;height:8.2px;background:#fdf1dc;border:0.6px solid #cdb27a;box-sizing:border-box;"></div><svg style="left:171.2px;top:455.2px;" width="5.2" height="5.2" viewBox="0 0 5.2 5.2"><circle cx="2.6" cy="2.6" r="2.4" fill="#c8171e"/><path d="M1.6 1.6 L3.6 3.6 M3.6 1.6 L1.6 3.6" stroke="#fff" stroke-width="0.7"/></svg><span class="t" id="t33" style="left:179px;top:452.90px;line-height:10px;font-size:6.2px;color:#555;-webkit-text-stroke:0.05px currentColor;transform:scaleX(0.8688);">3</span><svg style="left:192.8px;top:455px;" width="6" height="5.4" viewBox="0 0 6 5.4"><path d="M3 0.4 L5.7 5 L0.3 5 Z" fill="#e0a820" stroke="#7a5a10" stroke-width="0.4"/><path d="M3 1.8 L3 3.6 M3 4.1 L3 4.5" stroke="#222" stroke-width="0.6"/></svg><span class="t" id="t34" style="left:200.8px;top:452.90px;line-height:10px;font-size:6.2px;color:#555;-webkit-text-stroke:0.05px currentColor;transform:scaleX(0.8688);">0</span><svg style="left:218.4px;top:455px;" width="5" height="6" viewBox="0 0 5 6"><path d="M2.5 5.6 L2.5 0.8 M0.8 2.4 L2.5 0.6 L4.2 2.4" fill="none" stroke="#7a7a84" stroke-width="0.7"/></svg><svg style="left:232px;top:455px;" width="5" height="6" viewBox="0 0 5 6"><path d="M2.5 0.4 L2.5 5.2 M0.8 3.6 L2.5 5.4 L4.2 3.6" fill="none" stroke="#7a7a84" stroke-width="0.7"/></svg><div style="left:244.4px;top:454.6px;width:0.5px;height:6.4px;background:#c2c4d2;"></div><svg style="left:250.6px;top:454.6px;" width="7" height="6.4" viewBox="0 0 7 6.4"><path d="M1 5.6 L3.6 2.8 M3 1 L5.8 3.6 L4.4 4.6 L2.2 2.4 Z" fill="#caa24a" stroke="#5a4a20" stroke-width="0.5"/></svg><svg style="left:259.8px;top:457.4px;" width="2.4" height="1.2" viewBox="0 0 2.4 1.2"><path d="M0 0 L2.4 0 L1.2 1.2 Z" fill="#222"/></svg><svg style="left:276px;top:456px;" width="4" height="4" viewBox="0 0 4 4"><path d="M3 0.4 L0.8 2 L3 3.6 Z" fill="#d2d3dc"/></svg><svg style="left:654px;top:456px;" width="4" height="4" viewBox="0 0 4 4"><path d="M0.8 0.4 L3.2 2 L0.8 3.6 Z" fill="#c6c7d2"/></svg><span class="t" id="t35" style="left:670.7px;top:453.00px;line-height:10px;font-size:6.2px;color:#1a1a1e;transform:scaleX(0.8138);">Ln: 46</span><span class="t" id="t36" style="left:693.7px;top:453.00px;line-height:10px;font-size:6.2px;color:#1a1a1e;transform:scaleX(0.7842);">Ch: 52</span><span class="t" id="t37" style="left:716.8px;top:453.00px;line-height:10px;font-size:6.2px;color:#1a1a1e;transform:scaleX(0.6832);">SPC</span><span class="t" id="t38" style="left:736px;top:453.00px;line-height:10px;font-size:6.2px;color:#1a1a1e;transform:scaleX(0.6802);">CRLF</span><div style="left:756px;top:34.7px;width:129px;height:188.6px;background:#fafafe;"></div><div style="left:756px;top:34.7px;width:129px;height:8.9px;background:#293e97;"></div><span class="t" id="t39" style="left:757.8px;top:34.50px;line-height:10px;font-size:7px;color:#ffffff;-webkit-text-stroke:0.18px currentColor;transform:scaleX(0.7822);">Solution Explorer</span><svg style="left:862.3px;top:38.75px;" width="3.4" height="1.7" viewBox="0 0 3.4 1.7"><path d="M0 0 L3.4 0 L1.7 1.7 Z" fill="#b4c6f8"/></svg><svg style="left:869.6px;top:36.4px;" width="5" height="6.4" viewBox="0 0 5 6.4"><path d="M1.4 0.6 L1.4 3.6 M3.4 0.6 L3.4 3.6 M0.4 3.7 L4.6 3.7 M2.5 3.8 L2.5 6" stroke="#a9b9ee" stroke-width="0.6" fill="none"/></svg><svg style="left:876.8px;top:36.6px;" width="6" height="6" viewBox="0 0 6 6"><path d="M0.8 0.8 L5.2 5.2 M5.2 0.8 L0.8 5.2" stroke="#e4e8fb" stroke-width="0.8"/></svg><div style="left:756px;top:43.5px;width:129px;height:14.6px;background:#dde3f8;"></div><svg style="left:759px;top:47px;" width="7" height="7" viewBox="0 0 7 7"><circle cx="3.5" cy="3.5" r="2.8" fill="none" stroke="#c5cbe6" stroke-width="0.8"/><path d="M5 3.5 L2.2 3.5" stroke="#c5cbe6" stroke-width="0.7"/></svg><svg style="left:769px;top:47px;" width="7" height="7" viewBox="0 0 7 7"><circle cx="3.5" cy="3.5" r="2.8" fill="none" stroke="#c5cbe6" stroke-width="0.8"/><path d="M2 3.5 L4.8 3.5" stroke="#c5cbe6" stroke-width="0.7"/></svg><svg style="left:779px;top:46.6px;" width="8" height="8" viewBox="0 0 8 8"><path d="M0.8 4 L4 1 L7.2 4 M1.8 3.4 L1.8 7 L3.4 7 L3.4 5 L4.6 5 L4.6 7 L6.2 7 L6.2 3.4" fill="none" stroke="#222" stroke-width="0.8"/></svg><svg style="left:789.5px;top:46.6px;" width="9" height="8" viewBox="0 0 9 8"><path d="M3 1.2 L8 1.2 L8 3.4 L5 3.4" fill="none" stroke="#222" stroke-width="0.7"/><path d="M4.4 1.2 L4.4 6 M4.4 5 L7.6 5 M6.4 3.8 L7.7 5 L6.4 6.2" fill="none" stroke="#222" stroke-width="0.7"/><path d="M3 5.8 L0.8 5.8 M1.8 4.8 L0.7 5.8 L1.8 6.8" fill="none" stroke="#2458b3" stroke-width="0.8"/></svg><div style="left:800.8px;top:45.6px;width:0.6px;height:10px;background:#a9b0cf;"></div><svg style="left:804px;top:46.4px;" width="8" height="8" viewBox="0 0 8 8"><circle cx="4.4" cy="4.4" r="2.5" fill="none" stroke="#222" stroke-width="0.8"/><path d="M4.4 3 L4.4 4.5 L5.4 4.5" fill="none" stroke="#222" stroke-width="0.6"/><path d="M0.6 0.8 L2.6 0.8 L1.6 2.4 Z" fill="#222"/></svg><svg style="left:814.8px;top:50.0px;" width="2.4" height="1.2" viewBox="0 0 2.4 1.2"><path d="M0 0 L2.4 0 L1.2 1.2 Z" fill="#222"/></svg><svg style="left:819.5px;top:46.4px;" width="9" height="8" viewBox="0 0 9 8"><path d="M1.4 3.6 Q2 1.4 4.4 1.4 L6.6 1.4 M5.4 0.2 L6.8 1.4 L5.4 2.6" fill="none" stroke="#222" stroke-width="0.9"/><path d="M7.6 4.4 Q7 6.6 4.6 6.6 L2.4 6.6 M3.6 5.4 L2.2 6.6 L3.6 7.8" fill="none" stroke="#222" stroke-width="0.9"/></svg><svg style="left:830.6px;top:46.6px;" width="8" height="8" viewBox="0 0 8 8"><path d="M5.6 1.6 A2.9 2.9 0 1 1 2.4 1.6" fill="none" stroke="#2f6fd0" stroke-width="0.9"/></svg><svg style="left:841px;top:46.6px;" width="8" height="8" viewBox="0 0 8 8"><rect x="0.8" y="1" width="6.4" height="5.6" rx="0.8" fill="#eef1fb" stroke="#222" stroke-width="0.8"/><path d="M2.4 3.8 L5.6 3.8" stroke="#555" stroke-width="0.6"/></svg><svg style="left:851px;top:46.6px;" width="8" height="8" viewBox="0 0 8 8"><path d="M1 1.6 L3.4 1.6 L3.4 6.8 L1 6.8 Z M4.4 1 L7 1 L7 6 L4.4 6 Z" fill="#eef1fb" stroke="#222" stroke-width="0.7"/><path d="M3.4 3 L4.4 2.6 M3.4 5 L4.4 4.8" stroke="#222" stroke-width="0.5"/></svg><div style="left:861px;top:45.6px;width:0.6px;height:10px;background:#a9b0cf;"></div><svg style="left:864.6px;top:48.4px;" width="8" height="5" viewBox="0 0 8 5"><path d="M3.2 1.2 L2.1 2.5 L3.2 3.8 M5 1.2 L6.1 2.5 L5 3.8" fill="none" stroke="#222" stroke-width="0.9"/></svg><div style="left:881px;top:46.2px;width:0.8px;height:1.7px;background:#333;"></div><div style="left:882.8px;top:46.2px;width:0.8px;height:1.7px;background:#333;"></div><div style="left:756px;top:58px;width:129px;height:9.2px;background:#ffffff;border-bottom:0.5px solid #e3e5f0;box-sizing:border-box;"></div><span class="t" id="t40" style="left:758px;top:57.90px;line-height:10px;font-size:6.8px;color:#72727e;transform:scaleX(0.8059);">Search Solution Explorer (Ctrl+;)</span><svg style="left:871px;top:58.6px;" width="8" height="8" viewBox="0 0 8 8"><circle cx="4.8" cy="3.2" r="1.9" fill="none" stroke="#333" stroke-width="0.9"/><path d="M3.4 4.6 L1 7" stroke="#333" stroke-width="1.1"/></svg><div style="left:879.2px;top:58.4px;width:0.5px;height:8px;background:#c6c9d8;"></div><svg style="left:880.8px;top:62.0px;" width="2.4" height="1.2" viewBox="0 0 2.4 1.2"><path d="M0 0 L2.4 0 L1.2 1.2 Z" fill="#222"/></svg><div style="left:756px;top:77.43px;width:129px;height:8.9px;background:#ebecf4;"></div><svg style="left:762.4px;top:69.4px;" width="8" height="8" viewBox="0 0 8 8"><rect x="1" y="0.8" width="5.4" height="4.6" fill="#fff" stroke="#222" stroke-width="0.8"/><rect x="1" y="0.6" width="5.4" height="1.5" fill="#222"/><path d="M0.4 4.6 L1.6 3.8 L3 5.2 L4 4.2 L4 7.2 L3 6.4 L1.6 7.4 L0.4 6.8 Z" fill="#7a3fc8"/></svg><span class="t" id="t41" style="left:772.2px;top:68.00px;line-height:10px;font-size:6.8px;color:#34343c;-webkit-text-stroke:0.12px currentColor;transform:scaleX(0.8035);">Solution 'CRUDS' (1 of 1 project)</span><svg style="left:760.4px;top:79.93px;" width="4" height="4" viewBox="0 0 4 4"><path d="M3.6 0.2 L3.6 3.6 L0.2 3.6 Z" fill="#222"/></svg><svg style="left:771px;top:78.53px;" width="7" height="6.6" viewBox="0 0 7 6.6"><rect x="0.5" y="0.6" width="6" height="5.2" fill="#fff" stroke="#444" stroke-width="0.6"/><rect x="2" y="1.9" width="3.2" height="2.6" fill="#2e9a40"/></svg><span class="t" id="t42" style="left:780.5px;top:76.93px;line-height:10px;font-size:6.9px;color:#111;font-weight:700;transform:scaleX(0.7465);">CRUDS</span><svg style="left:768.6px;top:88.46px;" width="3.8" height="4.8" viewBox="0 0 3.8 4.8"><path d="M0.4 0.3 L3.3 2.4 L0.4 4.5 Z" fill="#222"/></svg><svg style="left:779px;top:86.86px;" width="8" height="8" viewBox="0 0 8 8"><path d="M1.2 6.8 L4.2 3.8" stroke="#333" stroke-width="1.3" stroke-linecap="round"/><path d="M4.4 1 Q6 0.6 6.8 2 L5.6 2.6 L5.2 2 L4.2 2.6 Q3.6 1.8 4.4 1 Z M4 3 Q5.4 4.2 6.8 3" fill="#333" stroke="#333" stroke-width="0.6"/></svg><span class="t" id="t43" style="left:789.2px;top:85.86px;line-height:10px;font-size:6.8px;color:#1a1a1e;transform:scaleX(0.7778);">Properties</span><svg style="left:768.6px;top:97.38999999999999px;" width="3.8" height="4.8" viewBox="0 0 3.8 4.8"><path d="M0.4 0.3 L3.3 2.4 L0.4 4.5 Z" fill="#222"/></svg><svg style="left:779px;top:95.78999999999999px;" width="8" height="8" viewBox="0 0 8 8"><rect x="0.6" y="2.4" width="2" height="2" fill="#333"/><path d="M2.6 3.4 L4.2 3.4" stroke="#333" stroke-width="0.6"/><rect x="4.2" y="1.6" width="3.2" height="3.4" fill="#fff" stroke="#333" stroke-width="0.7"/></svg><span class="t" id="t44" style="left:789.2px;top:94.79px;line-height:10px;font-size:6.8px;color:#1a1a1e;transform:scaleX(0.7622);">References</span><svg style="left:779px;top:104.72px;" width="8" height="8" viewBox="0 0 8 8"><path d="M2.4 0.9 L5 0.9 L6.4 2.3 L6.4 6.8 L2.4 6.8" fill="#fff" stroke="#333" stroke-width="0.7"/><circle cx="2.3" cy="5" r="1.55" fill="#222"/><circle cx="2.6" cy="4.6" r="0.5" fill="#fff"/></svg><span class="t" id="t45" style="left:789.2px;top:103.72px;line-height:10px;font-size:6.8px;color:#1a1a1e;transform:scaleX(0.8591);">App.config</span><svg style="left:768.6px;top:115.25px;" width="3.8" height="4.8" viewBox="0 0 3.8 4.8"><path d="M0.4 0.3 L3.3 2.4 L0.4 4.5 Z" fill="#222"/></svg><svg style="left:779px;top:113.65px;" width="8" height="8" viewBox="0 0 8 8"><rect x="0.8" y="0.8" width="6.4" height="6" fill="#fff" stroke="#333" stroke-width="0.8"/><rect x="0.8" y="0.8" width="6.4" height="1.4" fill="#333"/><rect x="2" y="3.4" width="1.8" height="1.2" fill="#2458b3"/><rect x="4.4" y="3.4" width="1.8" height="1.2" fill="#2458b3"/><rect x="2" y="5.2" width="1.8" height="1" fill="#2458b3"/></svg><span class="t" id="t46" style="left:789.2px;top:112.65px;line-height:10px;font-size:6.8px;color:#1a1a1e;transform:scaleX(0.8365);">frmMain.cs</span><svg style="left:768.6px;top:124.17999999999999px;" width="3.8" height="4.8" viewBox="0 0 3.8 4.8"><path d="M0.4 0.3 L3.3 2.4 L0.4 4.5 Z" fill="#222"/></svg><svg style="left:779px;top:122.58px;" width="8" height="8" viewBox="0 0 8 8"><rect x="3.2" y="0.8" width="3.6" height="6" fill="#fff" stroke="#2458b3" stroke-width="0.8"/><path d="M0.6 4.4 L3 4.4 L3 6.8 L0.6 6.8 Z" fill="#e8c56a" stroke="#9a7a20" stroke-width="0.5"/></svg><span class="t" id="t47" style="left:789.2px;top:121.58px;line-height:10px;font-size:6.8px;color:#1a1a1e;transform:scaleX(0.8371);">Model.edmx</span><svg style="left:779px;top:131.51px;" width="8" height="8" viewBox="0 0 8 8"><path d="M2.4 0.9 L5 0.9 L6.4 2.3 L6.4 6.8 L2.4 6.8" fill="#fff" stroke="#333" stroke-width="0.7"/><circle cx="2.3" cy="5" r="1.55" fill="#222"/><circle cx="2.6" cy="4.6" r="0.5" fill="#fff"/></svg><span class="t" id="t48" style="left:789.2px;top:130.51px;line-height:10px;font-size:6.8px;color:#1a1a1e;transform:scaleX(0.8142);">packages.config</span><svg style="left:768.6px;top:142.04px;" width="3.8" height="4.8" viewBox="0 0 3.8 4.8"><path d="M0.4 0.3 L3.3 2.4 L0.4 4.5 Z" fill="#222"/></svg><svg style="left:779px;top:140.44px;" width="8" height="8" viewBox="0 0 8 8"><text x="0.6" y="6" font-family="Liberation Sans" font-weight="700" font-size="5.6" fill="#2e8a3e">C#</text></svg><span class="t" id="t49" style="left:789.2px;top:139.44px;line-height:10px;font-size:6.8px;color:#1a1a1e;transform:scaleX(0.7942);">Program.cs</span><div style="left:756px;top:228px;width:129px;height:234px;background:#fafafe;"></div><div style="left:756px;top:228px;width:129px;height:9.2px;background:#293e97;"></div><span class="t" id="t50" style="left:757.8px;top:227.80px;line-height:10px;font-size:7px;color:#ffffff;-webkit-text-stroke:0.18px currentColor;transform:scaleX(0.7585);">Properties</span><svg style="left:862.3px;top:232.15px;" width="3.4" height="1.7" viewBox="0 0 3.4 1.7"><path d="M0 0 L3.4 0 L1.7 1.7 Z" fill="#b4c6f8"/></svg><svg style="left:869.6px;top:229.6px;" width="5" height="6.4" viewBox="0 0 5 6.4"><path d="M1.4 0.6 L1.4 3.6 M3.4 0.6 L3.4 3.6 M0.4 3.7 L4.6 3.7 M2.5 3.8 L2.5 6" stroke="#a9b9ee" stroke-width="0.6" fill="none"/></svg><svg style="left:876.8px;top:229.8px;" width="6" height="6" viewBox="0 0 6 6"><path d="M0.8 0.8 L5.2 5.2 M5.2 0.8 L0.8 5.2" stroke="#e4e8fb" stroke-width="0.8"/></svg><svg style="left:880.8px;top:242.85px;" width="2.2" height="1.1" viewBox="0 0 2.2 1.1"><path d="M0 0 L2.2 0 L1.1 1.1 Z" fill="#222"/></svg><div style="left:756px;top:249px;width:129px;height:11.6px;background:#dde2f6;"></div><svg style="left:758.4px;top:250.8px;" width="7.4" height="8" viewBox="0 0 7.4 8"><path d="M0.6 1.4 L6.6 1.4 M0.6 3.8 L6.6 3.8 M0.6 6.2 L6.6 6.2" stroke="#222" stroke-width="1.1"/><path d="M1.6 0.6 L4 0.6 M1.6 3 L4 3" stroke="#222" stroke-width="0.6"/></svg><div style="left:768.4px;top:249.8px;width:10.2px;height:10.2px;background:#fdf5c8;border:0.6px solid #d9bb62;box-sizing:border-box;"></div><svg style="left:769.8px;top:251px;" width="8" height="8" viewBox="0 0 8 8"><path d="M1 0.8 L3 0.8 L3 2.8 L1 2.8 Z M1 4.4 L3.2 4.4 L1 7 L3.2 7" fill="none" stroke="#222" stroke-width="0.8"/><path d="M5.6 1 L5.6 6.6 M4.4 5.2 L5.6 6.8 L6.8 5.2" fill="none" stroke="#2458b3" stroke-width="0.9"/></svg><div style="left:781.4px;top:250.8px;width:0.5px;height:8.4px;background:#b2b8d4;"></div><svg style="left:783px;top:251px;" width="7" height="8" viewBox="0 0 7 8"><path d="M1.2 6.8 L4.2 3.8" stroke="#9aa0bc" stroke-width="1.3" stroke-linecap="round"/><path d="M4.2 1 Q6 0.4 7 2 L5.6 2.6 L5.2 2 L4.2 3 Q3.4 1.8 4.2 1 Z M4 3 Q5.4 4.4 7 3" fill="#9aa0bc" stroke="#9aa0bc" stroke-width="0.7"/></svg><div style="left:897.2px;top:33.2px;width:2.8px;height:40.6px;background:#263b90;"></div><span class="t" id="t51" style="left:897.10px;top:33.70px;line-height:10px;font-size:7px;color:#f4f6ff;transform-origin:0 0;transform:rotate(90deg) scaleX(0.7887);">Diagnostic Tools</span><span class="t" id="t52" style="left:14.9px;top:463.60px;line-height:10px;font-size:6.9px;color:#f2f4ff;transform:scaleX(0.8580);">Output</span><div style="left:14.4px;top:474.4px;width:18px;height:2.6px;background:#2a3b90;"></div><div style="left:0px;top:476.8px;width:900px;height:11.2px;background:#1f2d8b;"></div><div style="left:0px;top:487.2px;width:900px;height:0.8px;background:#151d5c;"></div><svg style="left:2.4px;top:478.6px;" width="8" height="8" viewBox="0 0 8 8"><path d="M1 1 L3 1 L3 1.8 L5 1.8 L5 1 L7 1 L7 5.6 L5 5.6 L4 6.8 L3 5.6 L1 5.6 Z" fill="none" stroke="#dfe5ff" stroke-width="0.7"/></svg><span class="t" id="t53" style="left:13px;top:477.40px;line-height:10px;font-size:6.9px;color:#ffffff;-webkit-text-stroke:0.35px currentColor;transform:scaleX(0.7278);">Ready</span><svg style="left:731.2px;top:479px;" width="7" height="7" viewBox="0 0 7 7"><circle cx="3.5" cy="3.5" r="2.9" fill="#f4f6ff"/><path d="M3.5 5.4 L3.5 2 M2.2 3.2 L3.5 1.8 L4.8 3.2" fill="none" stroke="#1f2d8b" stroke-width="0.8"/></svg><span class="t" id="t54" style="left:741.5px;top:477.40px;line-height:10px;font-size:6.8px;color:#ffffff;-webkit-text-stroke:0.35px currentColor;transform:scaleX(0.8179);">Add to Source Control</span><svg style="left:798.8px;top:480.8px;" width="4" height="2.6" viewBox="0 0 4 2.6"><path d="M0.1 2.5 L2 0.1 L3.9 2.5 Z" fill="#eef1ff"/></svg><svg style="left:813px;top:478.6px;" width="8" height="8" viewBox="0 0 8 8"><path d="M4 0.6 L7.4 4 L4 7.4 L0.6 4 Z" fill="#f4f6ff"/><path d="M3 3 L5 5 M3 3 L3 5.4 M5 3 L5 5" stroke="#1f2d8b" stroke-width="0.6"/></svg><span class="t" id="t55" style="left:823.9px;top:477.40px;line-height:10px;font-size:6.8px;color:#ffffff;-webkit-text-stroke:0.35px currentColor;transform:scaleX(0.7714);">Select Repository</span><svg style="left:868.8px;top:480.8px;" width="4" height="2.6" viewBox="0 0 4 2.6"><path d="M0.1 2.5 L2 0.1 L3.9 2.5 Z" fill="#eef1ff"/></svg><svg style="left:881.6px;top:478px;" width="8" height="8" viewBox="0 0 8 8"><path d="M1 5.8 L1.8 4.8 L1.8 2.8 Q1.8 0.9 3.8 0.9 Q5.8 0.9 5.8 2.8 L5.8 4.8 L6.6 5.8 Z" fill="none" stroke="#f4f6ff" stroke-width="0.8"/><path d="M3 6.9 L4.6 6.9" stroke="#f4f6ff" stroke-width="0.8"/></svg><div style="left:886.7px;top:481.5px;width:4.6px;height:4.6px;border-radius:50%;background:#d8232b;"></div><span class="t" style="left:888.1px;top:481.6px;font-size:3.4px;line-height:4.4px;color:#ffd9d9;-webkit-text-stroke:0;">2</span><div style="left:749.3px;top:445.1px;width:138.6px;height:31.4px;background:#ffffff;border:1px solid #4bbcab;border-radius:3.6px;box-sizing:border-box;"></div><span class="t" id="t56" style="left:784.8px;top:451.30px;line-height:20px;font-size:16px;color:#c8183a;-webkit-text-stroke:0px currentColor;transform:scaleX(1.0631);">pazraki.ir</span><svg style="left:2.4px;top:432.7px;" width="32" height="32" viewBox="0 0 32 32"><g><circle cx="15.4" cy="15.6" r="8.4" fill="#f7f8fc" stroke="#dcdee8" stroke-width="0.6"/><path d="M8.4 6.6 Q5 9.6 5.2 14.6" fill="none" stroke="#eef0f8" stroke-width="1.2"/><path d="M22.6 24.6 Q26 21.6 25.6 16.4" fill="none" stroke="#d9dbe5" stroke-width="1.2"/><circle cx="12.6" cy="12" r="2.5" fill="#2f4496"/><circle cx="11.8" cy="18.6" r="2.5" fill="#2f4496"/><circle cx="19" cy="12.8" r="2.5" fill="#fbfbfe" stroke="#d4d6e0" stroke-width="0.6"/><circle cx="18.2" cy="19.4" r="2.5" fill="#fbfbfe" stroke="#d4d6e0" stroke-width="0.6"/></g></svg><span class="t" id="t57" style="left:29.3px;top:438.50px;line-height:20px;font-size:17px;color:#eaebf2;-webkit-text-stroke:0.6px currentColor;font-weight:700;transform:scaleX(1.0424);-webkit-text-stroke-color:#d3d5df;">/pazraki</span></div></body></html>
